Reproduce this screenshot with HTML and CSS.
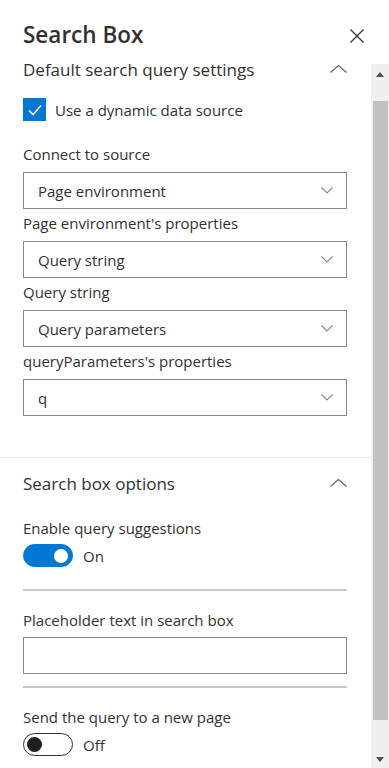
FILE: index.html
```html
<!DOCTYPE html>
<html lang="en">
  <head>
    <meta charset="UTF-8" />
    <meta name="viewport" content="width=device-width, initial-scale=1.0" />
    <title>Search Box</title>
    <link rel="stylesheet" href="styles.css">
  </head>
  <body>
    <div class="pane">
      <header class="pane-header">
        <h1>Search Box</h1>
        <button class="close" aria-label="Close">
          <svg width="14" height="14" viewBox="0 0 14 14"><path d="M0.5 0.5 L13.5 13.5 M13.5 0.5 L0.5 13.5" stroke="#323130" stroke-width="1.3" fill="none"/></svg>
        </button>
      </header>

      <div class="pane-body">
        <div class="pane-content">
          <section class="group first">
            <div class="group-header">
              <span>Default search query settings</span>
              <svg class="chev-up" width="17" height="8" viewBox="0 0 17 8"><path d="M0.5 7.5 L8.5 0.5 L16.5 7.5" stroke="#605e5c" stroke-width="1.1" fill="none"/></svg>
            </div>

            <label class="checkbox">
              <span class="box">
                <svg width="14" height="12" viewBox="0 0 14 12"><path d="M1 6.5 L5 10.5 L13 1.5" stroke="#fff" stroke-width="1.6" fill="none"/></svg>
              </span>
              Use a dynamic data source
            </label>

            <div class="field">
              <div class="label">Connect to source</div>
              <div class="dropdown"><span>Page environment</span><svg class="chev-down" width="12" height="7" viewBox="0 0 12 7"><path d="M0.5 0.5 L6 6 L11.5 0.5" stroke="#8a8886" stroke-width="1.1" fill="none"/></svg></div>
            </div>
            <div class="field">
              <div class="label">Page environment's properties</div>
              <div class="dropdown"><span>Query string</span><svg class="chev-down" width="12" height="7" viewBox="0 0 12 7"><path d="M0.5 0.5 L6 6 L11.5 0.5" stroke="#8a8886" stroke-width="1.1" fill="none"/></svg></div>
            </div>
            <div class="field">
              <div class="label">Query string</div>
              <div class="dropdown"><span>Query parameters</span><svg class="chev-down" width="12" height="7" viewBox="0 0 12 7"><path d="M0.5 0.5 L6 6 L11.5 0.5" stroke="#8a8886" stroke-width="1.1" fill="none"/></svg></div>
            </div>
            <div class="field">
              <div class="label">queryParameters's properties</div>
              <div class="dropdown"><span>q</span><svg class="chev-down" width="12" height="7" viewBox="0 0 12 7"><path d="M0.5 0.5 L6 6 L11.5 0.5" stroke="#8a8886" stroke-width="1.1" fill="none"/></svg></div>
            </div>
          </section>

          <section class="group second">
            <div class="group-header">
              <span>Search box options</span>
              <svg class="chev-up" width="17" height="8" viewBox="0 0 17 8"><path d="M0.5 7.5 L8.5 0.5 L16.5 7.5" stroke="#605e5c" stroke-width="1.1" fill="none"/></svg>
            </div>

            <div class="field toggle-field">
              <div class="label">Enable query suggestions</div>
              <div class="toggle-row">
                <span class="toggle on"><span class="knob"></span></span>
                <span>On</span>
              </div>
            </div>
            <hr class="divider" />

            <div class="field">
              <div class="label">Placeholder text in search box</div>
              <input class="textbox" type="text" />
            </div>
            <hr class="divider lower" />

            <div class="field toggle-field">
              <div class="label">Send the query to a new page</div>
              <div class="toggle-row">
                <span class="toggle"><span class="knob"></span></span>
                <span>Off</span>
              </div>
            </div>
          </section>
        </div>

        <div class="scrollbar">
          <div class="sb-arrow up"></div>
          <div class="sb-thumb"></div>
          <div class="sb-arrow down"></div>
        </div>
      </div>
    </div>
  </body>
</html>
```

FILE: styles.css
```css
body {
  margin: 0;
  font-family: "Open Sans", "Noto Sans", sans-serif;
  color: #323130;
  background: #fff;
  overflow: hidden;
}

.pane {
  width: 389px;
  height: 768px;
  display: flex;
  flex-direction: column;
  overflow: hidden;
}

.pane-header {
  display: flex;
  justify-content: space-between;
  align-items: center;
  padding: 20px 25px 0 23px;
}

.pane-header h1 {
  margin: 0;
  font-size: 22.5px;
  line-height: 30px;
  font-weight: 600;
}

.close {
  border: none;
  background: none;
  padding: 0;
  margin-top: 2px;
  display: flex;
}

.pane-body {
  flex: 1;
  display: flex;
  min-height: 0;
}

.pane-content {
  flex: 1;
}

.group {
  padding: 0 24px 0 23px;
}

.group.first {
  border-bottom: 1px solid #edebe9;
  padding-bottom: 37px;
}

.group-header {
  display: flex;
  justify-content: space-between;
  align-items: center;
  font-size: 17px;
  line-height: 24px;
  margin-top: 8px;
}

.group.second .group-header {
  margin-top: 14px;
  margin-bottom: 22px;
}

.chev-up {
  margin-right: 0;
  margin-top: -3px;
}

.checkbox {
  display: flex;
  align-items: center;
  gap: 9px;
  font-size: 15px;
  line-height: 20px;
  margin: 16px 0 23px;
}

.box {
  width: 23px;
  height: 23px;
  background: #0078d4;
  display: flex;
  align-items: center;
  justify-content: center;
}

.field {
  display: flex;
  flex-direction: column;
}

.label {
  font-size: 15px;
  line-height: 20px;
  margin-bottom: 8px;
}

.toggle-field .label {
  margin-bottom: 6px;
}

.dropdown {
  height: 37px;
  box-sizing: border-box;
  border: 1px solid #8a8886;
  display: flex;
  align-items: center;
  justify-content: space-between;
  padding: 0 13px 0 14px;
  font-size: 15px;
  margin-bottom: 4px;
}

.toggle-row {
  display: flex;
  align-items: center;
  gap: 10px;
  font-size: 15px;
}

.toggle {
  width: 50px;
  height: 23px;
  box-sizing: border-box;
  border-radius: 12px;
  border: 1.5px solid #323130;
  display: flex;
  align-items: center;
  padding: 0 3px;
}

.toggle .knob {
  width: 15px;
  height: 15px;
  border-radius: 50%;
  background: #201f1e;
}

.toggle.on {
  background: #0078d4;
  border-color: #0078d4;
  justify-content: flex-end;
  padding: 0 4px;
}

.toggle.on .knob {
  width: 14px;
  height: 14px;
  background: #fff;
}

.divider {
  border: none;
  border-top: 2px solid #c8c8c8;
  margin: 22px 0 19px;
}

.divider.lower {
  margin-top: 12px;
}

.textbox {
  height: 37px;
  border: 1px solid #8a8886;
  box-sizing: border-box;
  margin: 0;
  margin-top: -1px;
}

.scrollbar {
  width: 18px;
  margin-top: 14px;
  background: #f0f0f0;
  display: flex;
  flex-direction: column;
  align-items: center;
}

.sb-arrow {
  width: 0;
  height: 0;
  border-left: 4px solid transparent;
  border-right: 4px solid transparent;
}

.sb-arrow.up {
  border-bottom: 5px solid #505050;
  margin: 8px 0 24px;
}

.sb-arrow.down {
  border-top: 5px solid #505050;
  margin-top: 37px;
}

.sb-thumb {
  width: 15px;
  height: 619px;
  background: #c1c1c1;
}
```
